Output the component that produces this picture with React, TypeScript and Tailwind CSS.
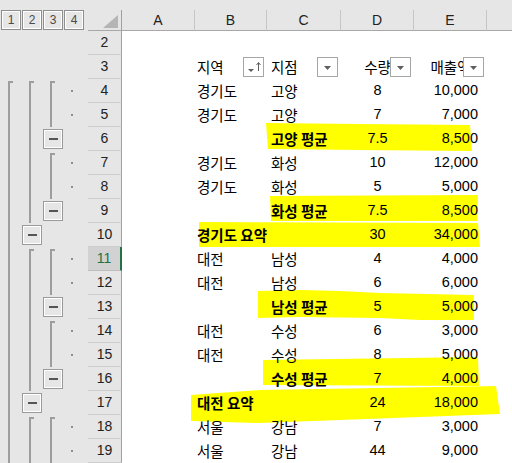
import React from "react";

type Lane = "none" | "mid" | "start" | "btn";

type RowData = {
  n: number;
  lanes: [Lane, Lane, Lane];
  dot?: boolean;
  b?: string;
  c?: string;
  d?: string;
  e?: string;
  bold?: boolean;
  selected?: boolean;
};

const rows: RowData[] = [
  { n: 4, lanes: ["start", "start", "start"], dot: true, b: "경기도", c: "고양", d: "8", e: "10,000" },
  { n: 5, lanes: ["mid", "mid", "mid"], dot: true, b: "경기도", c: "고양", d: "7", e: "7,000" },
  { n: 6, lanes: ["mid", "mid", "btn"], c: "고양 평균", d: "7.5", e: "8,500", bold: true },
  { n: 7, lanes: ["mid", "mid", "start"], dot: true, b: "경기도", c: "화성", d: "10", e: "12,000" },
  { n: 8, lanes: ["mid", "mid", "mid"], dot: true, b: "경기도", c: "화성", d: "5", e: "5,000" },
  { n: 9, lanes: ["mid", "mid", "btn"], c: "화성 평균", d: "7.5", e: "8,500", bold: true },
  { n: 10, lanes: ["mid", "btn", "none"], b: "경기도 요약", d: "30", e: "34,000", bold: true },
  { n: 11, lanes: ["mid", "start", "start"], dot: true, b: "대전", c: "남성", d: "4", e: "4,000", selected: true },
  { n: 12, lanes: ["mid", "mid", "mid"], dot: true, b: "대전", c: "남성", d: "6", e: "6,000" },
  { n: 13, lanes: ["mid", "mid", "btn"], c: "남성 평균", d: "5", e: "5,000", bold: true },
  { n: 14, lanes: ["mid", "mid", "start"], dot: true, b: "대전", c: "수성", d: "6", e: "3,000" },
  { n: 15, lanes: ["mid", "mid", "mid"], dot: true, b: "대전", c: "수성", d: "8", e: "5,000" },
  { n: 16, lanes: ["mid", "mid", "btn"], c: "수성 평균", d: "7", e: "4,000", bold: true },
  { n: 17, lanes: ["mid", "btn", "none"], b: "대전 요약", d: "24", e: "18,000", bold: true },
  { n: 18, lanes: ["mid", "start", "start"], dot: true, b: "서울", c: "강남", d: "7", e: "3,000" },
  { n: 19, lanes: ["mid", "mid", "mid"], dot: true, b: "서울", c: "강남", d: "44", e: "9,000" },
];

const KR = "font-['Noto_Sans_CJK_KR',sans-serif]";
const NUM = "font-['Liberation_Sans',Arial,sans-serif]";

function OutlineLane({ kind }: { kind: Lane }) {
  return (
    <div className="w-[21px] h-full shrink-0">
      {kind === "mid" && <div className="ml-[8px] w-[2px] h-full bg-[#9d9d9d]" />}
      {kind === "start" && (
        <div className="ml-[8px] mt-[2px] w-[5px] h-[22px] border-l-2 border-t-2 border-[#9d9d9d]" />
      )}
      {kind === "btn" && (
        <div className="ml-[1px] mt-[2px] w-[20px] h-[20px] border border-[#9a9a9a] bg-[#e6e6e6] shadow-[inset_0_0_0_1px_#ffffff] flex items-center justify-center">
          <div className="w-[9px] h-[2px] bg-[#555555]" />
        </div>
      )}
    </div>
  );
}

function Gutter({ lanes, dot }: { lanes?: [Lane, Lane, Lane]; dot?: boolean }) {
  return (
    <div className="w-[88px] h-full flex shrink-0 bg-[#e6e6e6]">
      {lanes && lanes.map((l, i) => <OutlineLane key={i} kind={l} />)}
      {dot && (
        <div className="w-[21px] h-full flex items-center">
          <div className="ml-[8px] w-[2px] h-[2px] bg-[#8c8c8c]" />
        </div>
      )}
    </div>
  );
}

function RowHead({ n, selected }: { n: number; selected?: boolean }) {
  return (
    <div
      className={
        selected
          ? "w-[34px] h-full shrink-0 flex items-center justify-center bg-[#d2d2d2] text-[#217346] border-r-2 border-r-[#217346] border-b border-b-[#bdbdbd] text-[14px] font-['Liberation_Sans',Arial,sans-serif]"
          : "w-[34px] h-full shrink-0 flex items-center justify-center bg-[#e6e6e6] text-[#222222] border-r border-r-[#a0a0a0] border-b border-b-[#cdcdcd] text-[14px] font-['Liberation_Sans',Arial,sans-serif]"
      }
    >
      {n}
    </div>
  );
}

function FilterBtn({ sorted }: { sorted?: boolean }) {
  return (
    <div className="absolute right-[3px] top-[2px] w-[21px] h-[20px] bg-white border border-[#a6a6a6] flex items-center justify-center">
      {sorted ? (
        <svg width="17" height="16" viewBox="0 0 17 16">
          <polygon points="3,10 9,10 6,13" fill="#5f5f5f" />
          <line x1="13.5" y1="4" x2="13.5" y2="12" stroke="#5f5f5f" strokeWidth="1" />
          <polyline points="11.5,6 13.5,3.5 15.5,6" fill="none" stroke="#5f5f5f" strokeWidth="1" />
        </svg>
      ) : (
        <svg width="9" height="6" viewBox="0 0 9 6" className="mt-[2px]">
          <polygon points="1,1 8,1 4.5,5" fill="#5f5f5f" />
        </svg>
      )}
    </div>
  );
}

function ColHead({ label, w, last }: { label: string; w: string; last?: boolean }) {
  return (
    <div
      className={`${w} h-full flex items-center justify-center border-b border-b-[#a8a8a8] text-[14px] text-[#222222] ${
        last ? "" : "border-r border-r-[#c6c6c6]"
      }`}
    >
      {label}
    </div>
  );
}

export default function App() {
  return (
    <div className="relative w-[512px] h-[463px] overflow-hidden bg-white select-none">
      {/* highlighter marks */}
      <svg className="absolute left-0 top-0 pointer-events-none" width="512" height="463" viewBox="0 0 512 463">
        <g fill="#ffff00">
          <polygon points="266,123 360,124 470,125 472,151 360,150 268,149" />
          <polygon points="270,196 478,195 477,221 271,221" />
          <polygon points="199,222 478,223 480,247 199,247" />
          <polygon points="258,291 300,290 340,291 380,293 474,295 474,320 420,320 380,318 300,317 258,318" />
          <polygon points="263,360 478,357 479,386 263,385" />
          <polygon points="191,395 260,390 496,386 500,414 260,423 191,421" />
        </g>
      </svg>

      <div className="relative">
        {/* top strip */}
        <div className="h-[10px] bg-[#e6e6e6]" />

        {/* column header row */}
        <div className="h-[21px] flex bg-[#e6e6e6] font-['Liberation_Sans',Arial,sans-serif]">
          <div className="w-[88px] h-full flex gap-[1px] pl-[1px] shrink-0">
            {[1, 2, 3, 4].map((l) => (
              <div
                key={l}
                className="w-[20px] h-[20px] border border-[#8e8e8e] shadow-[inset_0_0_0_1px_#ffffff] bg-[#e6e6e6] flex items-center justify-center text-[12px] text-[#4a4a4a]"
              >
                {l}
              </div>
            ))}
          </div>
          <div className="w-[34px] h-full shrink-0 flex items-end justify-end pr-[3px] pb-[2px] border-r border-r-[#a0a0a0] border-b border-b-[#a8a8a8]">
            <svg width="15" height="13" viewBox="0 0 15 13">
              <polygon points="15,0 15,13 0,13" fill="#b5b5b5" />
            </svg>
          </div>
          <ColHead label="A" w="w-[73px]" />
          <ColHead label="B" w="w-[72px]" />
          <ColHead label="C" w="w-[74px]" />
          <ColHead label="D" w="w-[73px]" />
          <ColHead label="E" w="w-[73px]" />
          <div className="flex-1 h-full border-b border-b-[#a8a8a8]" />
        </div>

        {/* row 2 */}
        <div className="h-[24px] flex">
          <Gutter />
          <RowHead n={2} />
          <div className="flex-1" />
        </div>

        {/* row 3 : table header with filters */}
        <div className={`h-[24px] flex text-[14.5px] text-black ${KR}`}>
          <Gutter />
          <RowHead n={3} />
          <div className="w-[73px] shrink-0" />
          <div className="relative w-[72px] shrink-0 flex items-center pl-[2px]">
            지역
            <FilterBtn sorted />
          </div>
          <div className="relative w-[74px] shrink-0 flex items-center pl-[4px]">
            지점
            <FilterBtn />
          </div>
          <div className="relative w-[73px] shrink-0 flex items-center justify-center overflow-hidden whitespace-nowrap">
            수량
            <FilterBtn />
          </div>
          <div className="relative w-[73px] shrink-0 flex items-center justify-center overflow-hidden whitespace-nowrap">
            매출액
            <FilterBtn />
          </div>
          <div className="flex-1" />
        </div>

        {rows.map((r) => (
          <div key={r.n} className="h-[24px] flex text-black">
            <Gutter lanes={r.lanes} dot={r.dot} />
            <RowHead n={r.n} selected={r.selected} />
            <div className="w-[73px] shrink-0" />
            <div
              className={`w-[72px] shrink-0 flex items-center pl-[2px] whitespace-nowrap text-[14.5px] ${KR} ${
                r.bold ? "font-bold" : ""
              }`}
            >
              {r.b}
            </div>
            <div
              className={`w-[74px] shrink-0 flex items-center pl-[4px] whitespace-nowrap text-[14.5px] ${KR} ${
                r.bold ? "font-bold" : ""
              }`}
            >
              {r.c}
            </div>
            <div className={`w-[73px] shrink-0 flex items-center justify-center text-[14.5px] ${NUM}`}>{r.d}</div>
            <div className={`w-[73px] shrink-0 flex items-center justify-end pr-[9px] text-[14.5px] ${NUM}`}>{r.e}</div>
            <div className="flex-1" />
          </div>
        ))}
      </div>
    </div>
  );
}
